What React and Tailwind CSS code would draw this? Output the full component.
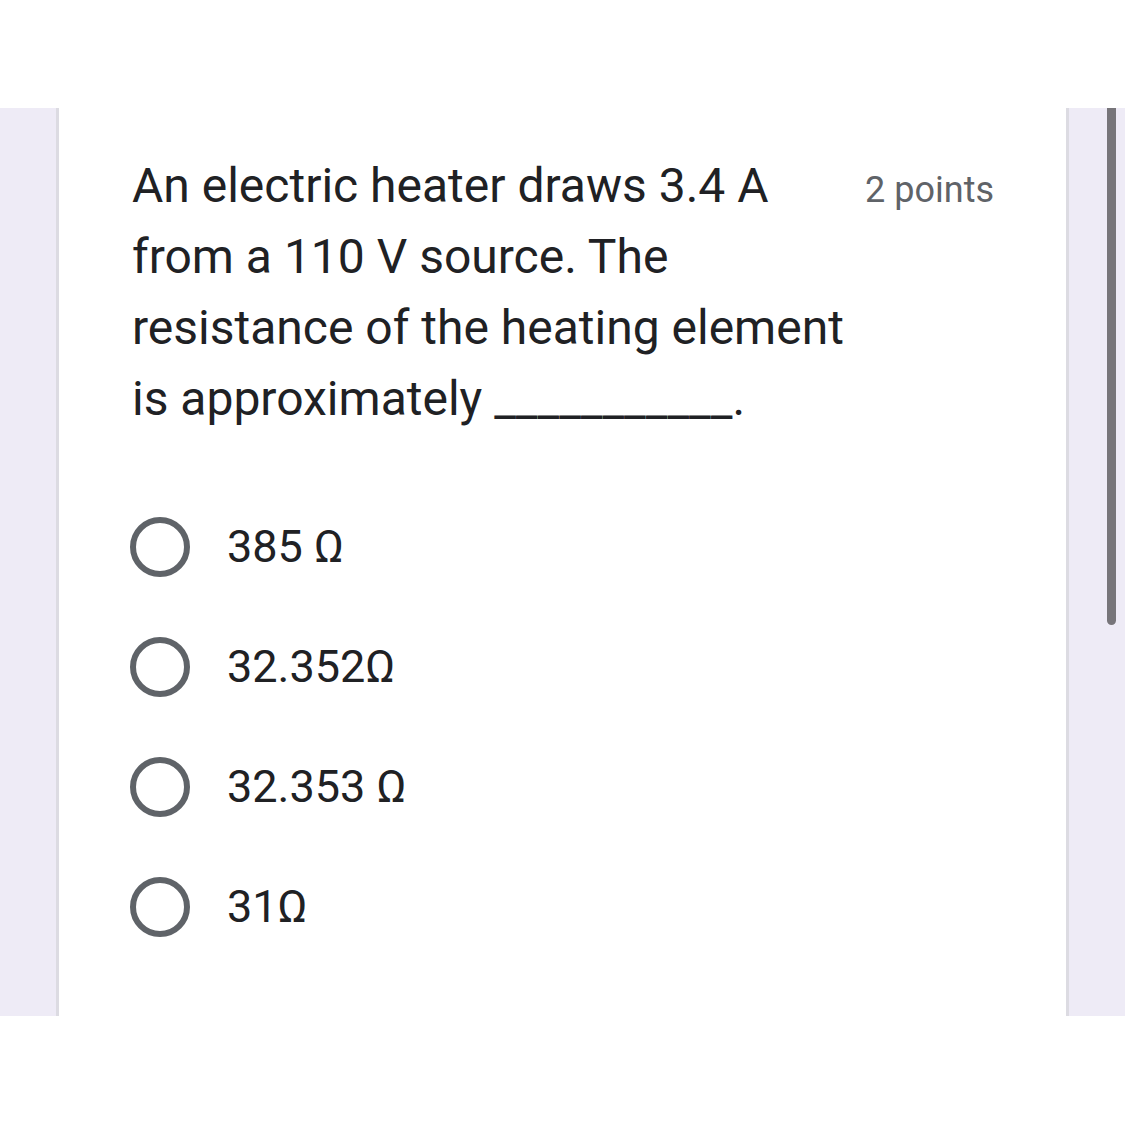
export default function App() {
  const options = ["385 Ω", "32.352Ω", "32.353 Ω", "31Ω"];
  return (
    <div className="w-[1125px] h-[1125px] bg-white flex flex-col" style={{ fontFamily: "Roboto, 'Noto Sans', sans-serif" }}>
      <div className="h-[108px] shrink-0" />
      <div className="h-[908px] flex bg-[#eeebf6] relative">
        <div className="w-[56px] shrink-0" />
        <div className="w-[1013px] shrink-0 bg-white border-x-[3px] border-[#dcdbe2] pl-[73px] pr-[70px] pt-[42px]">
          <div className="flex items-start justify-between">
            <div className="text-[48px] leading-[71px] text-[#202124] w-[720px]">
              An electric heater draws 3.4 A from a 110 V source. The resistance of the heating element is approximately ___________.
            </div>
            <div className="text-[36px] leading-[71px] text-[#5f6368] whitespace-nowrap mr-[2px] mt-[5px]">2 points</div>
          </div>
          <div className="mt-[83px] flex flex-col gap-[60px]">
            {options.map((o) => (
              <div key={o} className="flex items-center h-[60px]">
                <div className="w-[60px] h-[60px] rounded-full border-[6px] border-[#5f6368] shrink-0 -ml-[2px]" />
                <div className="ml-[37px] text-[45px] text-[#202124]">{o}</div>
              </div>
            ))}
          </div>
        </div>
        <div className="flex-1 relative">
          <div className="absolute left-[38px] top-0 w-[9px] h-[517px] bg-[#77757a] rounded-b-full" />
        </div>
      </div>
    </div>
  );
}
